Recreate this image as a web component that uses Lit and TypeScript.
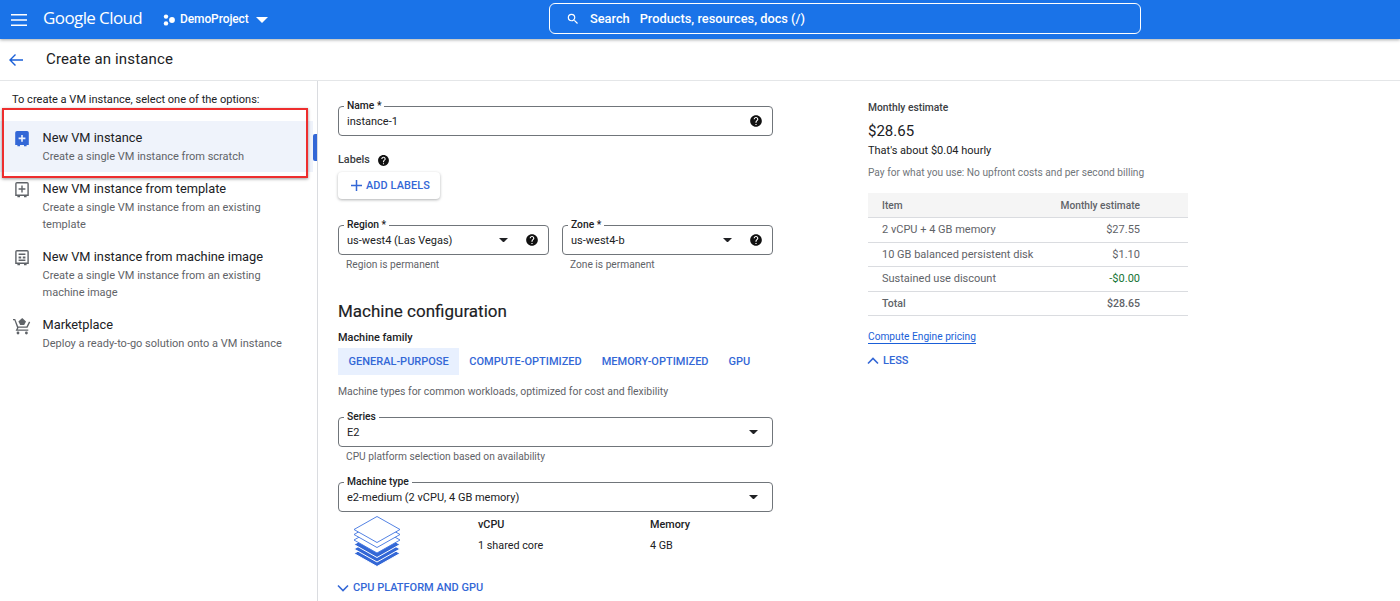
import { LitElement, html, css, svg } from "lit";
import { customElement } from "lit/decorators.js";

const help = html`<svg class="help" viewBox="0 0 24 24"><path d="M12 2C6.48 2 2 6.48 2 12s4.48 10 10 10 10-4.48 10-10S17.52 2 12 2zm1 17h-2v-2h2v2zm2.07-7.75l-.9.92C13.45 12.9 13 13.5 13 15h-2v-.5c0-1.1.45-2.1 1.17-2.83l1.24-1.26c.37-.36.59-.86.59-1.41 0-1.1-.9-2-2-2s-2 .9-2 2H8c0-2.21 1.79-4 4-4s4 1.79 4 4c0 .88-.36 1.68-.93 2.25z"/></svg>`;
const drop = html`<svg class="drop" viewBox="0 0 10 5"><path d="M0 0h10L5 5z"/></svg>`;

const layer = (y: number, filled: boolean) =>
  svg`<path d="M24 ${y}L47 ${y + 13}L24 ${y + 26}L1 ${y + 13}Z" fill="${filled ? "#3367d6" : "#fff"}" stroke="${filled ? "#fff" : "#3f74e0"}" stroke-width="${filled ? 1 : 0.9}"/>`;

@customElement("app-root")
export class AppRoot extends LitElement {
  static styles = css`
    :host { display: block; height: 100vh; overflow: hidden; background: #fff; font-family: Roboto, "Liberation Sans", sans-serif; color: #202124; }
    * { box-sizing: border-box; }
    .top { height: 39px; background: #1a73e8; color: #fff; display: flex; align-items: center; position: relative; box-shadow: 0 1px 3px rgba(60,64,67,.45); z-index: 2; }
    .menu { width: 16px; height: 12px; margin-left: 11px; fill: #fff; flex: none; }
    .brand { margin-left: 16px; font: 400 17px/20px "Open Sans", sans-serif; letter-spacing: -.6px; width: 120px; white-space: nowrap; margin-bottom: 3px; flex: none; }
    .dots { width: 13px; height: 12px; fill: #fff; flex: none; }
    .proj { font-size: 12px; font-weight: 500; margin-left: 4px; letter-spacing: -.1px; width: 76px; margin-bottom: 1px; flex: none; }
    .topdrop { width: 12px; height: 6px; fill: #fff; flex: none; }
    .search { position: absolute; left: 549px; top: 3px; width: 592px; height: 31px; border: 1px solid #fff; border-radius: 6px; display: flex; align-items: center; font-size: 12.8px; font-weight: 500; padding-left: 16px; }
    .search svg { width: 14px; height: 14px; fill: #fff; margin-right: 10px; }
    .search b { font-weight: 500; margin-right: 10px; }
    .sub { height: 42px; border-bottom: 1px solid #e4e6e8; display: flex; align-items: center; }
    .back { width: 16px; height: 14px; margin-left: 8px; fill: none; stroke: #1a5fd8; stroke-width: 1.4; }
    .sub h1 { margin: 0 0 1px 22px; font-size: 15px; line-height: 18px; font-weight: 400; color: #202124; letter-spacing: .15px; }
    .body { display: flex; height: 520px; }
    .side { width: 318px; border-right: 1px solid #dadce0; padding-top: 12px; position: relative; flex: none; }
    .intro { font-size: 11.05px; line-height: 14px; margin: 0 0 14px 12px; color: #202124; }
    .opt { display: flex; padding: 8px 4px 7px 14px; }
    .opt.active { background: #eff3fb; margin-right: 4px; }
    .opt svg { width: 16px; height: 18px; margin: 1px 12.5px 0 0; flex: none; fill: #5f6368; }
    .opt.active svg { fill: #3367d6; }
    .opt.cart { padding-left: 13px; }
    .opt.cart svg { width: 18px; margin-right: 11.5px; }
    .ot { font-size: 12.8px; line-height: 18px; margin-bottom: 1px; color: #202124; }
    .os { font-size: 11px; line-height: 17px; color: #5f6368; width: 245px; }
    .cart .os { width: 262px; }
    .bar { position: absolute; right: 0; top: 53px; width: 4px; height: 27px; background: #3367d6; border-radius: 2px 0 0 2px; }
    .redbox { position: absolute; left: 2px; top: 27px; width: 306px; height: 70px; border: 2.5px solid #ee2e2e; box-shadow: 0 1px 3px rgba(0,0,0,.4); }
    .main { width: 455px; padding: 25px 0 0 20px; flex: none; }
    .field { position: relative; height: 30px; border: 1px solid #70757a; border-radius: 4px; display: flex; align-items: center; padding: 0 9px 0 8px; font-size: 11px; color: #202124; }
    .field .lab { position: absolute; left: 5px; top: -7px; padding: 0 3px; background: #fff; font-size: 10.3px; line-height: 12px; font-weight: 500; }
    .field .val { flex: 1; }
    .help { width: 14px; height: 14px; flex: none; fill: #111; }
    .drop { width: 9px; height: 4.5px; fill: #202124; flex: none; }
    .spacer { width: 5px; flex: none; }
    .labels { display: flex; align-items: center; margin-top: 17px; font-size: 10.8px; line-height: 14px; font-weight: 500; color: #3c4043; gap: 7px; }
    .labels .help { width: 13px; height: 13px; }
    .add { display: flex; align-items: center; width: 102px; height: 27px; margin-top: 5px; border-radius: 4px; box-shadow: 0 1px 3px rgba(60,64,67,.4); color: #3367d6; font-size: 10.9px; font-weight: 500; padding-left: 13px; gap: 4px; letter-spacing: .1px; }
    .add svg { width: 11px; height: 11px; fill: none; stroke: #3367d6; stroke-width: 1.5; }
    .row { display: flex; gap: 13px; margin-top: 26px; }
    .col { flex: 1; }
    .col .drop { margin-right: 17px; }
    .hint { font-size: 10.2px; line-height: 12px; color: #5f6368; padding-left: 8px; margin-top: 4px; }
    h2 { margin: 29px 0 0; font-size: 17px; line-height: 22px; font-weight: 400; color: #202124; -webkit-text-stroke: .15px #202124; }
    .fam { margin-top: 9px; font-size: 10.9px; font-weight: 500; line-height: 14px; }
    .tabs { display: flex; margin-top: 3px; font-size: 11px; font-weight: 500; color: #3367d6; height: 27px; align-items: center; }
    .tabs span { height: 27px; line-height: 27px; margin-right: 20px; }
    .tabs .on { background: #e8f0fe; padding: 0 10.5px; margin-right: 10px; }
    .mt { margin-top: 10px; font-size: 10.43px; line-height: 14px; color: #5f6368; }
    .series { margin-top: 18px; }
    .mtype { margin-top: 19px; }
    .details { display: flex; margin-top: 3px; height: 54px; font-size: 10.8px; }
    .stack { width: 48px; height: 51px; margin: 1px 0 0 15px; flex: none; }
    .spec { line-height: 14px; padding-top: 3px; }
    .spec.a { margin-left: 77px; width: 172px; }
    .spec b { display: block; font-weight: 500; margin-bottom: 7px; }
    .more { display: flex; align-items: center; gap: 4px; margin-top: 12px; font-size: 11px; font-weight: 500; color: #3367d6; line-height: 14px; }
    .more svg { width: 12px; height: 8px; fill: none; stroke: #3367d6; stroke-width: 1.6; margin-left: -1px; }
    .est { width: 320px; margin-left: 95px; padding-top: 20px; flex: none; }
    .e1 { font-size: 10.3px; font-weight: 500; line-height: 14px; color: #3c4043; }
    .e2 { font-size: 15px; line-height: 20px; margin-top: 6px; }
    .e3 { font-size: 11px; line-height: 14px; margin-top: 3px; }
    .e4 { font-size: 10.17px; line-height: 14px; color: #70757a; margin-top: 8px; }
    .tbl { margin-top: 13px; font-size: 11px; color: #5f6368; }
    .tr { display: flex; justify-content: space-between; height: 24.5px; align-items: center; padding: 0 48px 0 14px; border-bottom: 1px solid #dadce0; }
    .tr.hd { background: #f5f5f5; height: 25px; font-size: 10.2px; font-weight: 500; }
    .tr.tot { font-weight: 500; font-size: 10.6px; }
    .green { color: #137333; }
    .link { display: inline-block; margin-top: 15px; font-size: 10.2px; line-height: 12px; color: #1a5fd8; border-bottom: 1px solid #1a5fd8; }
    .less { display: flex; align-items: center; gap: 4px; margin-top: 10px; font-size: 11px; font-weight: 500; color: #3367d6; line-height: 14px; }
    .less svg { width: 12px; height: 8px; fill: none; stroke: #3367d6; stroke-width: 1.6; margin-left: -1px; }
  `;

  render() {
    return html`
      <div class="top">
        <svg class="menu" viewBox="0 0 16 12"><path d="M0 0h16v1.5H0zM0 5.2h16v1.5H0zM0 10.5h16V12H0z"/></svg>
        <span class="brand">Google Cloud</span>
        <svg class="dots" viewBox="0 0 13 12"><circle cx="3" cy="2.6" r="2.2"/><circle cx="3" cy="9.4" r="2.2"/><circle cx="9" cy="6" r="2.9"/></svg>
        <span class="proj">DemoProject</span>
        <svg class="topdrop" viewBox="0 0 10 5"><path d="M0 0h10L5 5z"/></svg>
        <div class="search">
          <svg viewBox="0 0 24 24"><path d="M15.5 14h-.79l-.28-.27A6.47 6.47 0 0 0 16 9.5 6.5 6.5 0 1 0 9.5 16c1.61 0 3.09-.59 4.23-1.57l.27.28v.79l5 4.99L20.49 19l-4.99-5zm-6 0C7.01 14 5 11.99 5 9.5S7.01 5 9.5 5 14 7.01 14 9.5 11.99 14 9.5 14z"/></svg>
          <b>Search</b><span>Products, resources, docs (/)</span>
        </div>
      </div>
      <div class="sub">
        <svg class="back" viewBox="0 0 16 14"><path d="M15 7H2M7.5 1.5L2 7l5.5 5.5"/></svg>
        <h1>Create an instance</h1>
      </div>
      <div class="body">
        <div class="side">
          <p class="intro">To create a VM instance, select one of the options:</p>
          <div class="opt active">
            <svg viewBox="0 0 16 18"><path fill-rule="evenodd" d="M3 1h10a1.8 1.8 0 0 1 1.8 1.8V15H12.6v1.2H10V15H6v1.2H3.4V15H1.2V2.8A1.8 1.8 0 0 1 3 1zm4.2 4v2.6H4.6v1.6h2.6v2.6h1.6V9.2h2.6V7.6H8.8V5z"/></svg>
            <div><div class="ot">New VM instance</div><div class="os">Create a single VM instance from scratch</div></div>
          </div>
          <div class="opt">
            <svg viewBox="0 0 16 18"><path fill-rule="evenodd" d="M3 1h10a1.8 1.8 0 0 1 1.8 1.8V15H12.6v1.2H10V15H6v1.2H3.4V15H1.2V2.8A1.8 1.8 0 0 1 3 1zm-.4 1.4v11.2h10.8V2.4zM7.3 4.6h1.4v2.7h2.7v1.4H8.7v2.7H7.3V8.7H4.6V7.3h2.7z"/></svg>
            <div><div class="ot">New VM instance from template</div><div class="os">Create a single VM instance from an existing template</div></div>
          </div>
          <div class="opt">
            <svg viewBox="0 0 16 18"><path fill-rule="evenodd" d="M3 1h10a1.8 1.8 0 0 1 1.8 1.8V15H12.6v1.2H10V15H6v1.2H3.4V15H1.2V2.8A1.8 1.8 0 0 1 3 1zm-.4 1.4v11.2h10.8V2.4zM4.6 4.4h6.8v1.5H4.6zM4.6 7.6h2.6v1.8H4.6zM8.8 7.6h2.6v1.8H8.8zM4.6 10.6h6.8v1.5H4.6z"/></svg>
            <div><div class="ot">New VM instance from machine image</div><div class="os">Create a single VM instance from an existing machine image</div></div>
          </div>
          <div class="opt cart">
            <svg viewBox="0 0 18 18"><path d="M9.2 1L13 4.4 11.2 8H7.2L5.4 4.4z"/><path d="M0 2h2.2l3 7.6h8.3L16 4.6l1.2.6-2.7 5.6H5.6l-.9 1.7h10.6v1.3H2.6l1.5-3L1.4 3.3H0z"/><circle cx="5" cy="16" r="1.4"/><circle cx="13.4" cy="16" r="1.4"/></svg>
            <div><div class="ot">Marketplace</div><div class="os">Deploy a ready-to-go solution onto a VM instance</div></div>
          </div>
          <div class="bar"></div>
          <div class="redbox"></div>
        </div>
        <div class="main">
          <div class="field"><span class="lab">Name *</span><span class="val">instance-1</span>${help}</div>
          <div class="labels">Labels ${help}</div>
          <div class="add"><svg viewBox="0 0 11 11"><path d="M5.5 0v11M0 5.5h11"/></svg>ADD LABELS</div>
          <div class="row">
            <div class="col">
              <div class="field"><span class="lab">Region *</span><span class="val">us-west4 (Las Vegas)</span>${drop}${help}</div>
              <div class="hint">Region is permanent</div>
            </div>
            <div class="col">
              <div class="field"><span class="lab">Zone *</span><span class="val">us-west4-b</span>${drop}${help}</div>
              <div class="hint">Zone is permanent</div>
            </div>
          </div>
          <h2>Machine configuration</h2>
          <div class="fam">Machine family</div>
          <div class="tabs"><span class="on">GENERAL-PURPOSE</span><span>COMPUTE-OPTIMIZED</span><span>MEMORY-OPTIMIZED</span><span>GPU</span></div>
          <div class="mt">Machine types for common workloads, optimized for cost and flexibility</div>
          <div class="field series"><span class="lab">Series</span><span class="val">E2</span>${drop}<span class="spacer"></span></div>
          <div class="hint">CPU platform selection based on availability</div>
          <div class="field mtype"><span class="lab">Machine type</span><span class="val">e2-medium (2 vCPU, 4 GB memory)</span>${drop}<span class="spacer"></span></div>
          <div class="details">
            <svg class="stack" viewBox="0 0 48 51">${[24.5, 20, 15.5].map((y) => layer(y, true))}${[11, 5.5, 0.5].map((y) => layer(y, false))}</svg>
            <div class="spec a"><b>vCPU</b>1 shared core</div>
            <div class="spec b"><b>Memory</b>4 GB</div>
          </div>
          <div class="more"><svg viewBox="0 0 12 8"><path d="M1 1.5l5 5 5-5"/></svg>CPU PLATFORM AND GPU</div>
        </div>
        <div class="est">
          <div class="e1">Monthly estimate</div>
          <div class="e2">$28.65</div>
          <div class="e3">That's about $0.04 hourly</div>
          <div class="e4">Pay for what you use: No upfront costs and per second billing</div>
          <div class="tbl">
            <div class="tr hd"><span>Item</span><span>Monthly estimate</span></div>
            <div class="tr"><span>2 vCPU + 4 GB memory</span><span>$27.55</span></div>
            <div class="tr"><span>10 GB balanced persistent disk</span><span>$1.10</span></div>
            <div class="tr"><span>Sustained use discount</span><span class="green">-$0.00</span></div>
            <div class="tr tot"><span>Total</span><span>$28.65</span></div>
          </div>
          <span class="link">Compute Engine pricing</span>
          <div class="less"><svg viewBox="0 0 12 8"><path d="M1 6.5l5-5 5 5"/></svg>LESS</div>
        </div>
      </div>
    `;
  }
}
